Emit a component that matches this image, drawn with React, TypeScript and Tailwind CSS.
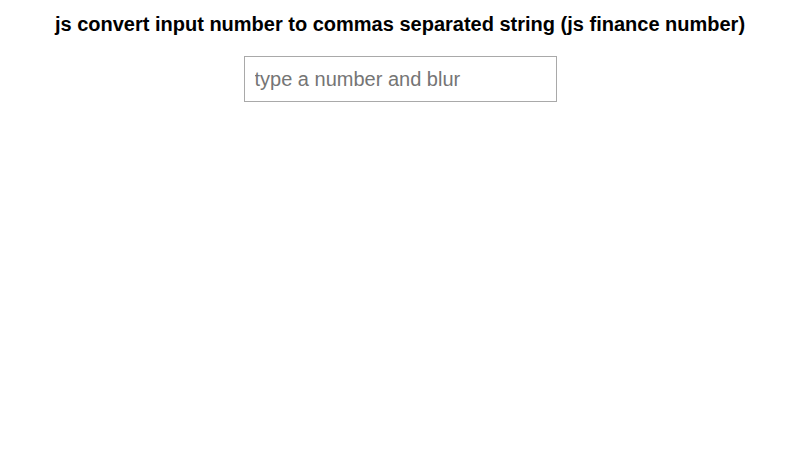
export default function App() {
  return (
    <main className="min-h-screen bg-white font-['Liberation_Sans',Arial,sans-serif] text-black">
      <div className="flex flex-col items-center pt-[12px]">
        <h1 className="text-[20px] font-bold leading-[24px]">
          js convert input number to commas separated string (js finance number)
        </h1>
        <input
          type="text"
          placeholder="type a number and blur"
          className="mt-[20px] h-[46px] w-[313px] border border-[#a9a9a9] px-[10px] text-[20px] outline-none placeholder:text-[#757575]"
        />
      </div>
    </main>
  );
}
